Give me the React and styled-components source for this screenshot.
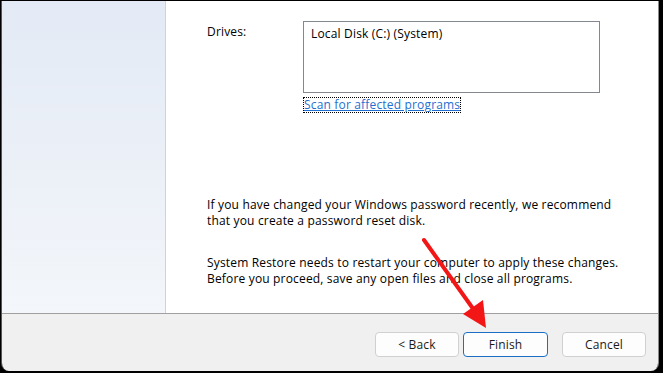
import React from "react";
import styled, { createGlobalStyle } from "styled-components";

const GlobalStyle = createGlobalStyle`
  html, body {
    margin: 0;
    padding: 0;
    background: #000;
  }
  body {
    font-family: "Open Sans", "Noto Sans", Arial, sans-serif;
    font-size: 12px;
    letter-spacing: 0.17px;
    color: #000;
  }
`;

const Screen = styled.div`
  position: relative;
  width: 663px;
  height: 373px;
  padding: 1px 4px 2px 1px;
  box-sizing: border-box;
  overflow: hidden;
`;

const Window = styled.div`
  display: flex;
  flex-direction: column;
  height: 100%;
  border-left: 1px solid #555;
  border-right: 1px solid #8a8a8a;
  border-radius: 0 0 8px 8px;
  overflow: hidden;
  box-sizing: border-box;
`;

const Main = styled.div`
  display: flex;
  height: 312px;
`;

const Sidebar = styled.aside`
  width: 163px;
  background: linear-gradient(180deg, #e3eaf5 0%, #f3f6fa 100%);
  border-right: 1px solid #c6d4e7;
`;

const Content = styled.section`
  flex: 1;
  background: #fff;
  padding: 20px 0 0 41px;
  display: flex;
  flex-direction: column;
`;

const DriveRow = styled.div`
  display: grid;
  grid-template-columns: 96px 297px;
  align-items: start;
`;

const Label = styled.div`
  padding-top: 3px;
  line-height: 16px;
`;

const ListBox = styled.div`
  height: 72px;
  border: 1px solid #838790;
  box-sizing: border-box;
  padding: 4px 7px;
  line-height: 16px;
`;

const ScanLink = styled.a`
  align-self: flex-start;
  margin: 4px 0 0 96px;
  border: 1px dotted #000;
  color: #1f6fd0;
  text-decoration: underline;
  line-height: 14px;
  padding: 0;
`;

const Paragraph = styled.p`
  margin: ${(p) => p.$top}px 0 0;
  line-height: 16px;
  white-space: pre-line;
`;

const Footer = styled.footer`
  flex: 1;
  background: #f0f0f0;
  border-top: 1px solid #a0a0a0;
  display: flex;
  justify-content: flex-end;
  align-items: flex-start;
  padding: 18px 12px 0 0;
  gap: 4px;
`;

const Button = styled.button`
  width: ${(p) => p.$w || 84}px;
  height: 25px;
  margin-left: ${(p) => p.$gap || 0}px;
  background: #fdfdfd;
  border: 1px solid ${(p) => (p.$primary ? "#1a6fc4" : "#d0d0d0")};
  border-radius: 4px;
  font-family: inherit;
  font-size: 12px;
  letter-spacing: inherit;
  color: #1a1a1a;
  padding: 0;
`;

const Arrow = styled.svg`
  position: absolute;
  left: 0;
  top: 0;
  pointer-events: none;
`;

export default function App() {
  return (
    <>
      <GlobalStyle />
      <Screen>
        <Window>
          <Main>
            <Sidebar />
            <Content>
              <DriveRow>
                <Label>Drives:</Label>
                <ListBox>Local Disk (C:) (System)</ListBox>
              </DriveRow>
              <ScanLink href="#">Scan for affected programs</ScanLink>
              <Paragraph $top={84}>
                {"If you have changed your Windows password recently, we recommend\nthat you create a password reset disk."}
              </Paragraph>
              <Paragraph $top={26}>
                {"System Restore needs to restart your computer to apply these changes.\nBefore you proceed, save any open files and close all programs."}
              </Paragraph>
            </Content>
          </Main>
          <Footer>
            <Button>&lt; Back</Button>
            <Button $primary $w={85}>Finish</Button>
            <Button $gap={10}>Cancel</Button>
          </Footer>
        </Window>
        <Arrow width="663" height="373" viewBox="0 0 663 373">
          <line x1="424" y1="240" x2="474" y2="310" stroke="#f21616" strokeWidth="4" strokeLinecap="round" />
          <polygon points="486,328 463,314 483,300" fill="#f21616" />
        </Arrow>
      </Screen>
    </>
  );
}
